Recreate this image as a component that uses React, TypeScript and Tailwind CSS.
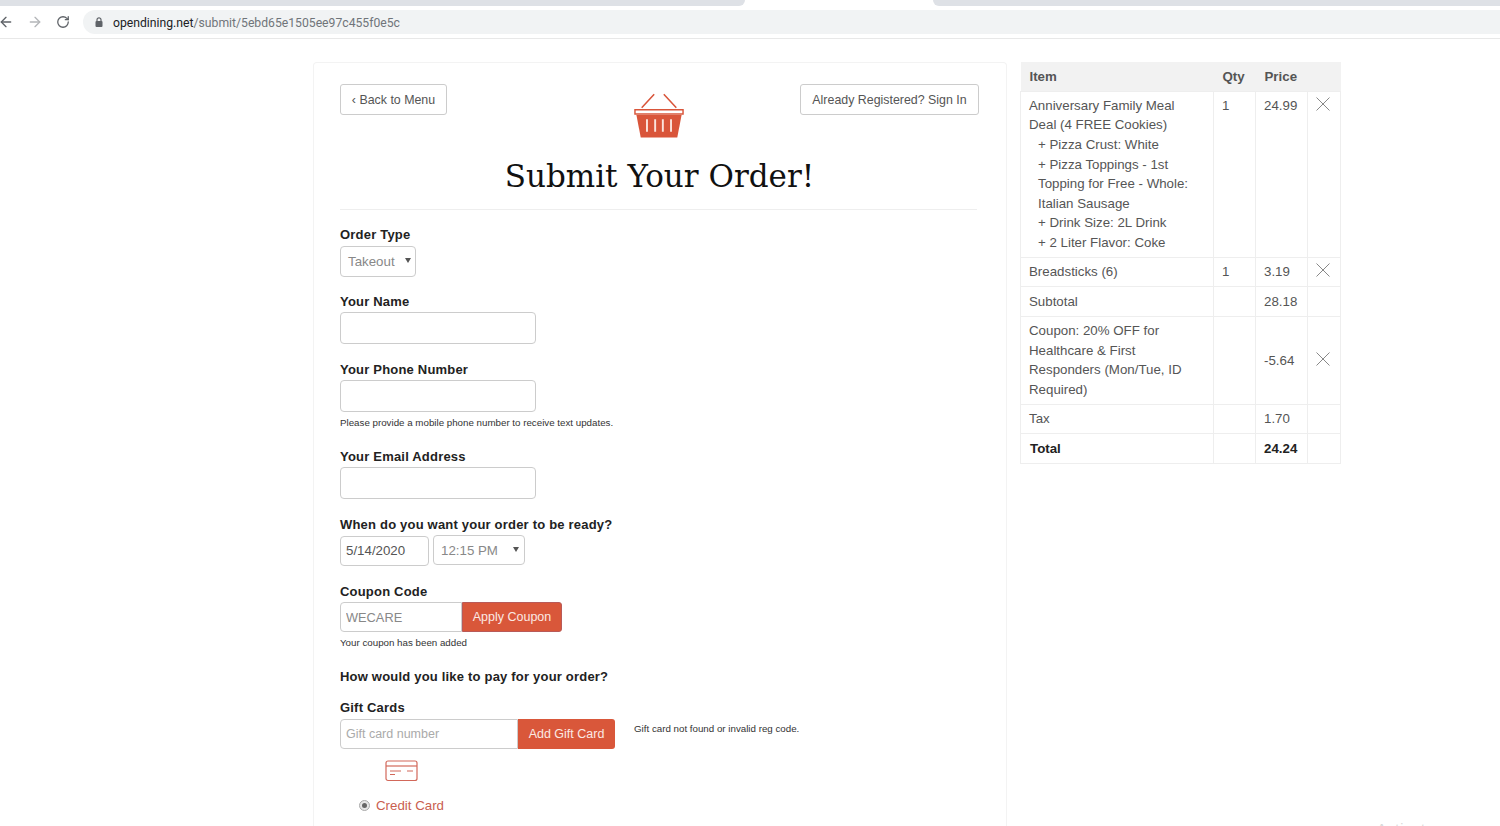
import { ArrowLeft, ArrowRight, RotateCw } from 'lucide-react';

function Triangle() {
  return (
    <svg width="6" height="6" viewBox="0 0 6 6" className="mb-[3px] shrink-0">
      <path d="M0 1h6L3 6z" fill="#555" />
    </svg>
  );
}

function RemoveIcon({ className = 'mt-[1px]' }: { className?: string }) {
  return (
    <svg width="14" height="14" viewBox="0 0 14 14" className={`block ${className}`}>
      <path d="M0.5 0.5l13 13M13.5 0.5l-13 13" stroke="#888" strokeWidth="1" fill="none" />
    </svg>
  );
}

function LockIcon() {
  return (
    <svg width="8" height="10" viewBox="0 0 8 10">
      <path d="M2 4V2.800a2 2 0 0 1 4 0V4" stroke="#5f6368" strokeWidth="1.200" fill="none" />
      <rect x="0.500" y="4" width="7" height="6" rx="1" fill="#5f6368" />
    </svg>
  );
}

function Basket() {
  return (
    <svg width="50" height="47" viewBox="0 0 52 48">
      <path d="M8 16L21 2M44 16L31 2" stroke="#d9553a" strokeWidth="1.600" fill="none" />
      <path d="M1 18h50v4.500H1z" fill="#fff" stroke="#d9553a" strokeWidth="1.500" />
      <path d="M2.500 23.500h47L45 47H7z" fill="#d9553a" />
      <path d="M13.500 28v13M22 28v13M30 28v13M38.500 28v13" stroke="#fbe3dc" strokeWidth="2" />
    </svg>
  );
}

function CardIcon() {
  return (
    <svg width="34" height="22" viewBox="0 0 34 22">
      <rect x="1" y="1" width="31" height="19.500" rx="2" fill="none" stroke="#d2685a" strokeWidth="1.200" />
      <path d="M1 6h31" stroke="#d2685a" strokeWidth="1.200" />
      <path d="M5 11h11M22 11h6M5 14.500h5" stroke="#d2685a" strokeWidth="1.200" fill="none" />
    </svg>
  );
}

function Label({ children }: { children: React.ReactNode }) {
  return <div className="h-5 pt-[1px] text-[13px] font-bold leading-5 tracking-[0.2px] text-[#222]">{children}</div>;
}

function TextInput() {
  return <input className="mt-[1px] block h-[32px] w-[196px] rounded-[4px] border border-[#ccc] bg-white" />;
}

function HelpText({ children }: { children: React.ReactNode }) {
  return <div className="text-[9.75px] leading-[14px] text-[#333]">{children}</div>;
}

const itemOptions = [
  '+ Pizza Crust: White',
  '+ Pizza Toppings - 1st Topping for Free - Whole: Italian Sausage',
  '+ Drink Size: 2L Drink',
  '+ 2 Liter Flavor: Coke',
];

const cell = 'border border-[#eeeeee] px-[8px] py-[4.4px] align-top font-normal text-left';

export default function App() {
  return (
    <div className="relative h-[826px] w-[1500px] overflow-hidden bg-white font-['Liberation_Sans',Arial,sans-serif] text-[13.3px] text-[#555]">
      {/* browser chrome */}
      <div className="flex h-[6px]">
        <div className="w-[745px] rounded-br-[6px] bg-[#dee1e6]" />
        <div className="w-[188px] bg-white" />
        <div className="flex-1 rounded-bl-[6px] bg-[#dee1e6]" />
      </div>
      <div className="flex h-[33px] items-center border-b border-[#e8e8e8]">
        <ArrowLeft size={16} strokeWidth={2} className="ml-[-2px] text-[#5f6368]" />
        <ArrowRight size={16} strokeWidth={2} className="ml-[13px] text-[#b4b6b9]" />
        <RotateCw size={14} strokeWidth={2.200} className="ml-[13px] text-[#5f6368]" />
        <div className="ml-[13px] flex h-[24px] flex-1 items-center rounded-l-full bg-[#f1f3f4] pl-[12px]">
          <LockIcon />
          <span className="ml-[10px] pt-[2px] font-['Roboto',sans-serif] text-[12.2px] text-[#70757a]">
            <span className="text-[#202124]">opendining.net</span>/submit/5ebd65e1505ee97c455f0e5c
          </span>
        </div>
      </div>

      <div className="flex items-start pl-[313px] pt-[23px]">
        {/* order form */}
        <div className="h-[800px] w-[694px] shrink-0 rounded-t-[4px] border-x border-t border-[#f3f3f3] pl-[26px] pr-[27px] pt-[21px]">
          <div className="flex h-[125px] flex-col items-center">
            <div className="flex w-full items-start justify-between">
              <button className="h-[31px] w-[107px] rounded-[3px] border border-[#ccc] bg-white pt-[1px] text-[12.4px] text-[#555]">
                ‹ Back to Menu
              </button>
              <button className="h-[31px] w-[179px] rounded-[3px] border border-[#ccc] bg-white pt-[1px] text-[12.4px] text-[#555]">
                Already Registered? Sign In
              </button>
            </div>
            <div className="ml-[-2px] mt-[-23px]">
              <Basket />
            </div>
            <h1 className="mt-[17px] font-['DejaVu_Serif',serif] text-[31px] leading-[40px] text-[#111]">
              Submit Your Order!
            </h1>
          </div>
          <div className="h-px w-[637px] bg-[#eeeeee]" />

          <div className="mt-[14px]">
            <Label>Order Type</Label>
            <div className="mt-[2px] flex h-[31px] w-[76px] items-center justify-between rounded-[4px] border border-[#ccc] pl-[7px] pr-[4px] text-[#888]">
              Takeout
              <Triangle />
            </div>
          </div>

          <div className="mt-[14px]">
            <Label>Your Name</Label>
            <TextInput />
          </div>

          <div className="mt-[15px]">
            <Label>Your Phone Number</Label>
            <TextInput />
            <div className="mt-[4px]">
              <HelpText>Please provide a mobile phone number to receive text updates.</HelpText>
            </div>
          </div>

          <div className="mt-[16px]">
            <Label>Your Email Address</Label>
            <TextInput />
          </div>

          <div className="mt-[15px]">
            <Label>When do you want your order to be ready?</Label>
            <div className="flex items-start gap-[4px]">
              <input
                defaultValue="5/14/2020"
                className="mt-[2px] h-[30px] w-[89px] rounded-[4px] border border-[#ccc] px-[5px] pb-[2px] text-[13.3px] text-[#555]"
              />
              <div className="mt-[1px] flex h-[30px] w-[92px] items-center justify-between rounded-[4px] border border-[#ccc] pl-[7px] pr-[5px] pt-[1px] text-[#888]">
                12:15 PM
                <Triangle />
              </div>
            </div>
          </div>

          <div className="mt-[15px]">
            <Label>Coupon Code</Label>
            <div className="mt-[1px] flex">
              <input
                defaultValue="WECARE"
                className="h-[30px] w-[122px] rounded-l-[4px] border border-[#ccc] px-[5px] text-[12.8px] text-[#888]"
              />
              <button className="h-[30px] w-[100px] rounded-r-[3px] border border-[#b95a58] bg-[#d9573a] text-[12.5px] text-[#fbe9e4]">
                Apply Coupon
              </button>
            </div>
            <div className="mt-[4px]">
              <HelpText>Your coupon has been added</HelpText>
            </div>
          </div>

          <div className="mt-[16px]">
            <Label>How would you like to pay for your order?</Label>
          </div>

          <div className="mt-[11px]">
            <Label>Gift Cards</Label>
            <div className="mt-[2px] flex items-start">
              <input
                placeholder="Gift card number"
                className="h-[30px] w-[178px] rounded-l-[4px] border border-[#ccc] px-[5px] text-[12.5px] placeholder:text-[#aaa]"
              />
              <button className="h-[30px] w-[97px] rounded-r-[3px] bg-[#d9573a] text-[12.5px] text-[#fbe9e4]">
                Add Gift Card
              </button>
              <div className="ml-[19px] mt-[3px]">
                <HelpText>Gift card not found or invalid reg code.</HelpText>
              </div>
            </div>
          </div>

          <div className="ml-[45px] mt-[11px]">
            <CardIcon />
          </div>
          <div className="ml-[19px] mt-[14px] flex items-center gap-[6px] text-[#c9604f]">
            <span className="flex h-[11px] w-[11px] items-center justify-center rounded-full border border-[#aaa] bg-[#e6e6e6]">
              <span className="h-[5px] w-[5px] rounded-full bg-[#666]" />
            </span>
            Credit Card
          </div>
        </div>

        {/* cart */}
        <table className="ml-[13px] w-[320px] table-fixed border-collapse leading-[19.6px]">
          <colgroup>
            <col className="w-[193px]" />
            <col className="w-[42px]" />
            <col className="w-[52px]" />
            <col className="w-[33px]" />
          </colgroup>
          <thead>
            <tr className="h-[29px] bg-[#f2f2f2]">
              <th className="pl-[9px] pt-[1px] text-left font-bold">Item</th>
              <th className="pl-[9px] pt-[1px] text-left font-bold">Qty</th>
              <th className="pl-[9px] pt-[1px] text-left font-bold">Price</th>
              <th />
            </tr>
          </thead>
          <tbody>
            <tr>
              <td className={cell}>
                Anniversary Family Meal Deal (4 FREE Cookies)
                {itemOptions.map((o) => (
                  <div key={o} className="pl-[9px]">
                    {o}
                  </div>
                ))}
              </td>
              <td className={cell}>1</td>
              <td className={cell}>24.99</td>
              <td className={cell}>
                <RemoveIcon />
              </td>
            </tr>
            <tr>
              <td className={cell}>Breadsticks (6)</td>
              <td className={cell}>1</td>
              <td className={cell}>3.19</td>
              <td className={cell}>
                <RemoveIcon />
              </td>
            </tr>
            <tr>
              <td className={cell}>Subtotal</td>
              <td className={cell} />
              <td className={cell}>28.18</td>
              <td className={cell} />
            </tr>
            <tr>
              <td className={cell}>Coupon: 20% OFF for Healthcare &amp; First Responders (Mon/Tue, ID Required)</td>
              <td className={cell} />
              <td className={`${cell} !align-middle`}>-5.64</td>
              <td className={`${cell} !align-middle`}>
                <RemoveIcon className="mb-[3px]" />
              </td>
            </tr>
            <tr>
              <td className={cell}>Tax</td>
              <td className={cell} />
              <td className={cell}>1.70</td>
              <td className={cell} />
            </tr>
            <tr className="text-[#222]">
              <td className={`${cell} !pl-[9px] !font-bold`}>Total</td>
              <td className={cell} />
              <td className={`${cell} !font-bold`}>24.24</td>
              <td className={cell} />
            </tr>
          </tbody>
        </table>
      </div>

      <div className="absolute left-[1377px] top-[819px] text-[14px] tracking-[1px] text-[#d8d8d8]">Activate Windows</div>
    </div>
  );
}
